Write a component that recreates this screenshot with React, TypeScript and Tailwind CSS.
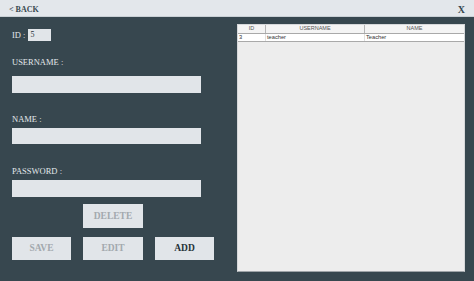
import React from "react";

const serif = { fontFamily: '"Liberation Serif", "Times New Roman", serif' };
const sans = { fontFamily: '"Liberation Sans", Arial, sans-serif' };

export default function App() {
  return (
    <div className="w-[474px] h-[281px] bg-[#37474f] flex flex-col overflow-hidden" style={serif}>
      <div className="h-[17px] bg-[#e3e7eb] flex items-center justify-between pt-[4px] pl-[9px] pr-[9px] border-b border-[#c9d0d5]">
        <span className="text-[8px] font-bold text-[#37474f] leading-none">&lt; BACK</span>
        <span className="text-[10px] font-bold text-[#37474f] leading-none">X</span>
      </div>
      <div className="flex flex-1">
        <div className="w-[237px] pl-[12px] flex flex-col">
          <div className="mt-[12px] h-[12px] flex items-center">
            <span className="text-[8.5px] text-[#e3e7eb] leading-none mr-[3px]">ID :</span>
            <div className="w-[23px] h-[12px] bg-[#e1e5e9] flex items-center pl-[2px] text-[8px] text-[#263238]">5</div>
          </div>
          <div className="mt-[15px] h-[12px] flex items-center text-[8.5px] text-[#e3e7eb] leading-none">USERNAME :</div>
          <div className="mt-[8px] w-[189px] h-[17px] bg-[#e1e5e9]" />
          <div className="mt-[20px] h-[12px] flex items-center text-[8.5px] text-[#e3e7eb] leading-none">NAME :</div>
          <div className="mt-[3px] w-[189px] h-[16px] bg-[#e1e5e9]" />
          <div className="mt-[21px] h-[12px] flex items-center text-[8.5px] text-[#e3e7eb] leading-none">PASSWORD :</div>
          <div className="mt-[3px] w-[189px] h-[17px] bg-[#e1e5e9]" />
          <div className="mt-[7px] ml-[71px] w-[60px] h-[24px] bg-[#e1e5e9] flex items-center justify-center text-[9.5px] font-bold text-[#a3a9ae]">DELETE</div>
          <div className="mt-[9px] flex gap-[12px]">
            <div className="w-[59px] h-[23px] bg-[#e1e5e9] flex items-center justify-center text-[9.5px] font-bold text-[#a3a9ae]">SAVE</div>
            <div className="w-[60px] h-[23px] bg-[#e1e5e9] flex items-center justify-center text-[9.5px] font-bold text-[#a3a9ae]">EDIT</div>
            <div className="w-[59px] h-[23px] bg-[#e1e5e9] flex items-center justify-center text-[9.5px] font-bold text-[#263238]">ADD</div>
          </div>
        </div>
        <div className="mt-[7px] w-[228px] h-[248px] bg-[#ededed] border border-[#d6d8da] border-b-[#9ea4a8] flex flex-col" style={sans}>
          <div className="flex h-[9px] bg-[#f4f4f4] border-b border-[#a9a9a9] text-[5.5px] text-[#555] leading-none">
            <div className="w-[28px] flex items-center justify-center border-r border-[#b5b5b5]">ID</div>
            <div className="w-[99px] flex items-center justify-center border-r border-[#b5b5b5]">USERNAME</div>
            <div className="flex-1 flex items-center justify-center">NAME</div>
          </div>
          <div className="flex h-[8px] bg-white border-b border-[#a9a9a9] text-[5.7px] text-[#333] leading-none">
            <div className="w-[28px] flex items-center pl-[1px] border-r border-[#e0e0e0]">3</div>
            <div className="w-[99px] flex items-center pl-[1px] border-r border-[#e0e0e0]">teacher</div>
            <div className="flex-1 flex items-center pl-[1px]">Teacher</div>
          </div>
        </div>
      </div>
    </div>
  );
}
